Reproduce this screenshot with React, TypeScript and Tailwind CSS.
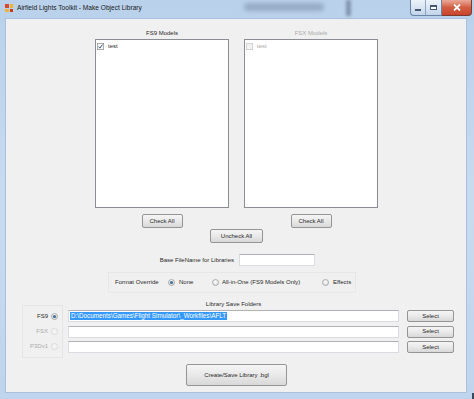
import React from "react";

const font = "font-['Liberation_Sans',Arial,sans-serif]";

function Radio({ checked = false, disabled = false }: { checked?: boolean; disabled?: boolean }) {
	return (
		<svg width="7" height="7" viewBox="0 0 14 14" className="shrink-0">
			<defs>
				<radialGradient id="rg" cx="50%" cy="40%" r="60%">
					<stop offset="0%" stopColor="#ffffff" />
					<stop offset="100%" stopColor="#d6d6d6" />
				</radialGradient>
			</defs>
			<circle
				cx="7"
				cy="7"
				r="6"
				fill={disabled ? "#f4f4f4" : "url(#rg)"}
				stroke={disabled ? "#cdcdcd" : "#959696"}
				strokeWidth="1.3"
			/>
			{checked && <circle cx="7" cy="7" r="3.2" fill="#41709a" />}
		</svg>
	);
}

function CheckBox({ checked = false, disabled = false }: { checked?: boolean; disabled?: boolean }) {
	return (
		<svg width="7" height="7" viewBox="0 0 14 14" className="shrink-0">
			<rect
				x="0.7"
				y="0.7"
				width="12.6"
				height="12.6"
				fill={disabled ? "#f2f2f2" : "#f4f6f9"}
				stroke={disabled ? "#c8c8c8" : "#8f8f8f"}
				strokeWidth="1.4"
			/>
			{checked && (
				<path d="M3 7.2 L5.8 10.2 L11 3.2" fill="none" stroke="#3a5a80" strokeWidth="2" />
			)}
		</svg>
	);
}

function Btn({ label, className }: { label: string; className: string }) {
	return (
		<div
			className={`flex items-center justify-center rounded-[2px] border border-[#959595] bg-gradient-to-b from-[#f5f5f5] via-[#e9e9e9] to-[#d8d8d8] text-[6px] text-[#2a2a2a] ${className}`}
		>
			{label}
		</div>
	);
}

function TextBox({ className, children }: { className: string; children?: React.ReactNode }) {
	return (
		<div
			className={`flex items-center border border-[#dadce2] border-t-[#b0b2b8] bg-white text-[6.3px] ${className}`}
		>
			{children}
		</div>
	);
}

function ListColumn({ title, disabled }: { title: string; disabled?: boolean }) {
	return (
		<div className="flex w-[134px] flex-col items-center">
			<div className={`h-[8px] text-[6px] leading-[8px] ${disabled ? "text-[#ababab]" : "text-[#2a2a2a]"}`}>
				{title}
			</div>
			<div className="mt-[2px] h-[169px] w-[134px] border border-[#8a8d94] bg-white">
				<div className="ml-[1px] mt-[2px] flex items-center gap-[4px]">
					<CheckBox checked={!disabled} disabled={disabled} />
					<span className={`text-[6px] leading-[8px] ${disabled ? "text-[#ababab]" : "text-[#2a2a2a]"}`}>test</span>
				</div>
			</div>
			<Btn label="Check All" className="mt-[6px] h-[14px] w-[41px]" />
		</div>
	);
}

function FolderRow({ label, checked, disabled }: { label: string; checked?: boolean; disabled?: boolean }) {
	return (
		<div className="flex h-[12px] items-center justify-end gap-[3px]">
			<span className={`text-[6px] ${disabled ? "text-[#ababab]" : "text-[#2a2a2a]"}`}>{label}</span>
			<Radio checked={checked} disabled={disabled} />
		</div>
	);
}

export default function App() {
	return (
		<div
			className={`relative flex h-[399px] w-[474px] flex-col overflow-hidden bg-gradient-to-b from-[#b9d1eb] via-[#c7dbf0] to-[#bfd5ed] ${font}`}
		>
			{/* blurred desktop seen through the glass */}
			<div className="absolute left-[244px] top-[3px] h-[8px] w-[80px] rounded bg-[#53677e]/35 blur-[2px]" />
			<div className="absolute left-[346px] top-0 h-[16px] w-[5px] bg-[#56687d]/55 blur-[1.5px]" />

			<div className="relative flex h-[18px] items-start">
				<div className="ml-[5px] mt-[4px] grid h-[8px] w-[8px] grid-cols-2 gap-[1px]">
					<div className="bg-[#d9482b]" />
					<div className="bg-[#f0b232]" />
					<div className="bg-[#f0b232]" />
					<div className="bg-[#c83a22]" />
				</div>
				<div className="ml-[4px] mt-[3px] text-[6.6px] leading-[9px] text-[#1a1a1a]">
					Airfield Lights Toolkit - Make Object Library
				</div>
				<div className="ml-auto mr-[2px] flex">
					<div className="flex h-[16px] overflow-hidden rounded-bl-[4px] border border-t-0 border-[#6a84a6] bg-gradient-to-b from-[#edf3fa] via-[#d9e5f2] to-[#c2d4e9]">
						<div className="flex w-[15px] items-end justify-center border-r border-[#8ea5c1] pb-[4px]">
							<div className="h-[2px] w-[6px] border-[0.5px] border-[#44576f] bg-white" />
						</div>
						<div className="flex w-[15px] items-center justify-center">
							<div className="h-[5px] w-[7px] border border-t-2 border-[#44576f] bg-white" />
						</div>
					</div>
					<div className="flex h-[16px] w-[30px] items-center justify-center rounded-br-[4px] border border-l-0 border-t-0 border-[#7a3a30] bg-gradient-to-b from-[#eaa999] via-[#d25c42] to-[#c9452c]">
						<svg width="8" height="7" viewBox="0 0 8 7">
							<path d="M1 0.5 L7 6.5 M7 0.5 L1 6.5" stroke="#ffffff" strokeWidth="1.8" />
						</svg>
					</div>
				</div>
			</div>

			<div className="flex flex-1 pb-[6px] pl-[5px] pr-[7px]">
				<div className="flex flex-1 flex-col border border-[#a9c1dc] bg-[#f0f0f0] text-[#2a2a2a]">
					<div className="ml-[89px] mt-[10px] flex w-[283px] flex-col items-center">
						<div className="flex w-full justify-between">
							<ListColumn title="FS9 Models" />
							<ListColumn title="FSX Models" disabled />
						</div>
						<Btn label="Uncheck All" className="mt-[1px] h-[14px] w-[53px]" />
					</div>

					<div className="ml-[153px] mt-[11px] flex items-center gap-[5px]">
						<span className="w-[75px] text-right text-[6px]">Base FileName for Libraries</span>
						<TextBox className="h-[12px] w-[76px]" />
					</div>

					<div className="ml-[102px] mt-[6px] flex h-[21px] w-[248px] items-center border border-[#e7e7e7] text-[6px]">
						<span className="ml-[6px] w-[53px]">Format Override</span>
						<div className="flex w-[44px] items-center gap-[4px]">
							<Radio checked />
							<span>None</span>
						</div>
						<div className="flex w-[110px] items-center gap-[3px]">
							<Radio />
							<span>All-in-One (FS9 Models Only)</span>
						</div>
						<div className="flex items-center gap-[4px]">
							<Radio />
							<span>Effects</span>
						</div>
					</div>

					<div className="mt-[7px] flex items-start">
						<div className="ml-[16px] mt-[5px] flex h-[53px] w-[41px] flex-col gap-[3px] border border-[#e5e5e5] pr-[4px] pt-[4px]">
							<FolderRow label="FS9" checked />
							<FolderRow label="FSX" disabled />
							<FolderRow label="P3Dv1" disabled />
						</div>
						<div className="ml-[5px] flex flex-col">
							<div className="w-[331px] text-center text-[6px] leading-[8px]">Library Save Folders</div>
							<div className="mt-[2px] flex flex-col gap-[3.5px]">
								<div className="flex items-center gap-[8px]">
									<TextBox className="h-[12px] w-[331px]">
										<span className="ml-[1px] bg-[#3399ff] px-[1px] leading-[8px] text-white">
											D:\Documents\Games\Flight Simulator\_Workfiles\AFLT
										</span>
									</TextBox>
									<Btn label="Select" className="h-[12px] w-[47px]" />
								</div>
								<div className="flex items-center gap-[8px]">
									<TextBox className="h-[12px] w-[331px]" />
									<Btn label="Select" className="h-[12px] w-[47px]" />
								</div>
								<div className="flex items-center gap-[8px]">
									<TextBox className="h-[12px] w-[331px]" />
									<Btn label="Select" className="h-[12px] w-[47px]" />
								</div>
							</div>
						</div>
					</div>

					<Btn label="Create/Save Library .bgl" className="ml-[180px] mt-[6px] h-[22px] w-[101px]" />
				</div>
			</div>
			<div className="absolute bottom-0 right-0 h-[6px] w-[2px] bg-[#3a4a5c]" />
		</div>
	);
}
